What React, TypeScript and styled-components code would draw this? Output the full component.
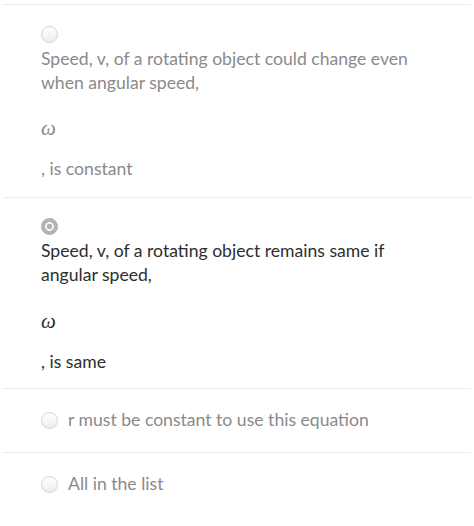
import React from 'react';
import styled, { createGlobalStyle } from 'styled-components';

interface Choice {
  id: number;
  lead?: string;
  tail?: string;
  text?: string;
  selected?: boolean;
}

const GlobalStyle = createGlobalStyle`
  body {
    margin: 0;
    background: #ffffff;
    font-family: Lato, "Open Sans", sans-serif;
  }
`;

const List = styled.div`
  padding-top: 4px;
  margin: 0 3px 0 3px;
`;

const Item = styled.div<{ $inline?: boolean; $pad?: string }>`
  border-top: 1.5px solid #ececec;
  display: flex;
  flex-direction: ${(p) => (p.$inline ? 'row' : 'column')};
  align-items: ${(p) => (p.$inline ? 'center' : 'flex-start')};
  gap: ${(p) => (p.$inline ? '10px' : '4px')};
  padding: ${(p) => p.$pad || '20px 40px 16px 38px'};
`;

const Radio = styled.span<{ $checked?: boolean }>`
  flex: none;
  width: 17px;
  height: 17px;
  box-sizing: border-box;
  border-radius: 50%;
  border: 1px solid ${(p) => (p.$checked ? '#acacac' : '#d4d4d4')};
  background: ${(p) =>
    p.$checked
      ? 'radial-gradient(circle, #b4b4b4 0 2.6px, #ffffff 3.2px 4px, #b4b4b4 4.6px)'
      : 'linear-gradient(#ffffff, #ededed)'};
`;

const Text = styled.div<{ $dark?: boolean }>`
  font-size: 17.6px;
  line-height: 24px;
  color: ${(p) => (p.$dark ? '#2e2e2e' : '#8a8a8a')};
`;

const Para = styled.p`
  margin: 0;
`;

const Omega = styled.p<{ $gap: number }>`
  margin: ${(p) => p.$gap}px 0 17px;
  font-family: "Liberation Serif", "DejaVu Serif", serif;
  font-style: italic;
  font-size: 21px;
`;

const choices: Choice[] = [
  { id: 1, lead: 'Speed, v, of a rotating object could change even when angular speed,', tail: ', is constant' },
  { id: 2, lead: 'Speed, v, of a rotating object remains same if angular speed,', tail: ', is same', selected: true },
  { id: 3, text: 'r must be constant to use this equation' },
  { id: 4, text: 'All in the list' },
];

function App() {
  return (
    <>
      <GlobalStyle />
      <List>
        {choices.map((c) =>
          c.text ? (
            <Item key={c.id} $inline $pad="19px 40px 20px 38px">
              <Radio $checked={c.selected} />
              <Text $dark={c.selected}>{c.text}</Text>
            </Item>
          ) : (
            <Item key={c.id} $pad={c.selected ? '20px 40px 14px 38px' : '21px 40px 16px 38px'}>
              <Radio $checked={c.selected} />
              <Text $dark={c.selected}>
                <Para>{c.lead}</Para>
                <Omega $gap={c.selected ? 22 : 21}>ω</Omega>
                <Para>{c.tail}</Para>
              </Text>
            </Item>
          )
        )}
      </List>
    </>
  );
}

export default App;
